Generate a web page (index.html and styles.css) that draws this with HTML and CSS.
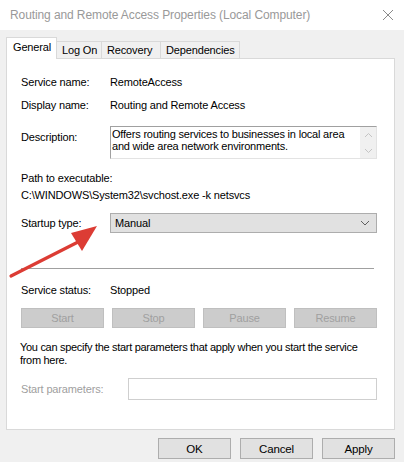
FILE: index.html
```html
<!DOCTYPE html>
<html>
<head>
<meta charset="utf-8">
<link rel="stylesheet" href="styles.css">
</head>
<body>
<div class="window">
  <div class="titlebar">
    <span class="title">Routing and Remote Access Properties (Local Computer)</span>
    <span class="close">
      <svg width="12" height="12" viewBox="0 0 12 12"><path d="M1 1 L11 11 M11 1 L1 11" stroke="#8a8a8a" stroke-width="1" fill="none"/></svg>
    </span>
  </div>
  <div class="tabs">
    <div class="tab selected">General</div>
    <div class="tab">Log On</div>
    <div class="tab">Recovery</div>
    <div class="tab">Dependencies</div>
  </div>
  <div class="panel">
    <div class="row r-service"><span class="label">Service name:</span><span>RemoteAccess</span></div>
    <div class="row r-display"><span class="label">Display name:</span><span>Routing and Remote Access</span></div>
    <div class="row r-desc">
      <span class="label desc-label">Description:</span>
      <div class="textbox">
        <div class="tb-text">Offers routing services to businesses in local area and wide area network environments.</div>
        <div class="tb-scroll">
          <svg width="9" height="6" viewBox="0 0 9 6"><path d="M1 5 L4.5 1.5 L8 5" stroke="#c4c4c4" fill="none"/></svg>
          <svg width="9" height="6" viewBox="0 0 9 6"><path d="M1 1 L4.5 4.5 L8 1" stroke="#c4c4c4" fill="none"/></svg>
        </div>
      </div>
    </div>
    <div class="path-label">Path to executable:</div>
    <div class="path-value">C:\WINDOWS\System32\svchost.exe -k netsvcs</div>
    <div class="row r-startup">
      <span class="label">Startup type:</span>
      <div class="select">
        <span>Manual</span>
        <svg width="10" height="6" viewBox="0 0 10 6"><path d="M1 1 L5 5 L9 1" stroke="#606060" fill="none"/></svg>
      </div>
    </div>
    <div class="separator"></div>
    <div class="row r-status"><span class="label">Service status:</span><span>Stopped</span></div>
    <div class="svc-buttons">
      <div class="btn disabled">Start</div>
      <div class="btn disabled">Stop</div>
      <div class="btn disabled">Pause</div>
      <div class="btn disabled">Resume</div>
    </div>
    <p class="hint">You can specify the start parameters that apply when you start the service from here.</p>
    <div class="row r-params">
      <span class="label params-label">Start parameters:</span>
      <div class="input"></div>
    </div>
  </div>
  <div class="footer">
    <div class="btn action">OK</div>
    <div class="btn action">Cancel</div>
    <div class="btn action">Apply</div>
  </div>
  <svg class="arrow" width="404" height="462" viewBox="0 0 404 462">
    <line x1="11" y1="276" x2="82" y2="240" stroke="#dc3c34" stroke-width="3.2" stroke-linecap="round"/>
    <polygon points="97,226 71,233 82,251" fill="#dc3c34"/>
  </svg>
</div>
</body>
</html>
```

FILE: styles.css
```css
* { box-sizing: border-box; }
html, body { margin: 0; padding: 0; }
body {
  width: 404px;
  height: 462px;
  overflow: hidden;
  background: #f0f0f0;
  font-family: "Liberation Sans", Arial, sans-serif;
  font-size: 11px;
  letter-spacing: -0.15px;
  color: #000;
}
.window { position: relative; width: 404px; height: 462px; }
.titlebar {
  height: 30px;
  background: #fff;
  display: flex;
  align-items: center;
  justify-content: space-between;
  padding-left: 10px;
}
.title { font-size: 12px; letter-spacing: -0.1px; color: #999; }
.close {
  width: 30px;
  display: flex;
  justify-content: center;
  margin-right: 1px;
}
.tabs {
  display: flex;
  align-items: flex-end;
  margin-top: 7px;
  margin-left: 6px;
  height: 21px;
  position: relative;
  z-index: 1;
}
.tab {
  height: 17px;
  line-height: 16px;
  border: 1px solid #d9d9d9;
  border-bottom: none;
  border-left: none;
  padding: 0 0 0 5px;
  background: #f0f0f0;
  white-space: nowrap;
}
.tab.selected {
  height: 22px;
  margin-bottom: -1px;
  line-height: 19px;
  background: #fff;
  border-left: 1px solid #d9d9d9;
  padding: 0 0 0 6px;
  width: 51px;
}
.tab:nth-child(2) { width: 45px; }
.tab:nth-child(3) { width: 59px; }
.tab:nth-child(4) { width: 79px; }
.panel {
  margin-left: 6px;
  width: 389px;
  height: 372px;
  background: #fff;
  border: 1px solid #d9d9d9;
  padding: 0 17px 0 14px;
}
.row { display: flex; align-items: flex-start; line-height: 15px; }
.label { width: 89px; flex: none; }
.r-service { margin-top: 16px; }
.r-display { margin-top: 8px; }
.r-desc { margin-top: 13px; }
.desc-label { margin-top: 4px; }
.textbox {
  flex: 1;
  height: 33px;
  display: flex;
  border-top: 1px solid #a0a0a0;
  border-left: 1px solid #a0a0a0;
  border-right: 1px solid #e3e3e3;
  border-bottom: 1px solid #e3e3e3;
}
.tb-text { flex: 1; line-height: 11.5px; padding: 2px 6px 0 1px; letter-spacing: -0.2px; }
.tb-scroll {
  width: 16px;
  background: #f0f0f0;
  display: flex;
  flex-direction: column;
  justify-content: space-between;
  align-items: center;
  padding: 5px 0 4px;
}
.tb-scroll svg { display: block; }
.path-label { margin-top: 12px; line-height: 15px; }
.path-value { margin-top: 2px; line-height: 15px; }
.r-startup { margin-top: 10px; align-items: center; }
.select {
  flex: 1;
  height: 20px;
  background: #e1e1e1;
  border: 1px solid #adadad;
  display: flex;
  align-items: center;
  justify-content: space-between;
  padding: 0 6px 0 4px;
}
.separator {
  margin-top: 35px;
  height: 1px;
  width: 353px;
  background: #a0a0a0;
}
.r-status { margin-top: 14px; }
.svc-buttons {
  margin-top: 10px;
  display: grid;
  grid-template-columns: repeat(4, 1fr);
  column-gap: 8px;
}
.btn {
  height: 20px;
  display: flex;
  align-items: center;
  justify-content: center;
  border: 1px solid #bfbfbf;
  font-size: 11px;
}
.btn.disabled { background: #cccccc; color: #a0a0a0; }
.hint { margin: 13px 0 0 -1px; line-height: 13px; letter-spacing: -0.3px; }
.r-params { margin-top: 11px; align-items: center; }
.params-label { width: 107px; color: #a0a0a0; }
.input { flex: 1; height: 22px; border: 1px solid #cfcfcf; background: #fff; }
.footer {
  display: flex;
  justify-content: flex-end;
  gap: 9px;
  padding-right: 9px;
  margin-top: 8px;
}
.btn.action {
  width: 73px;
  height: 21px;
  background: #e1e1e1;
  border-color: #adadad;
  font-size: 11.5px;
}
.arrow { position: absolute; left: 0; top: 0; pointer-events: none; }
```
